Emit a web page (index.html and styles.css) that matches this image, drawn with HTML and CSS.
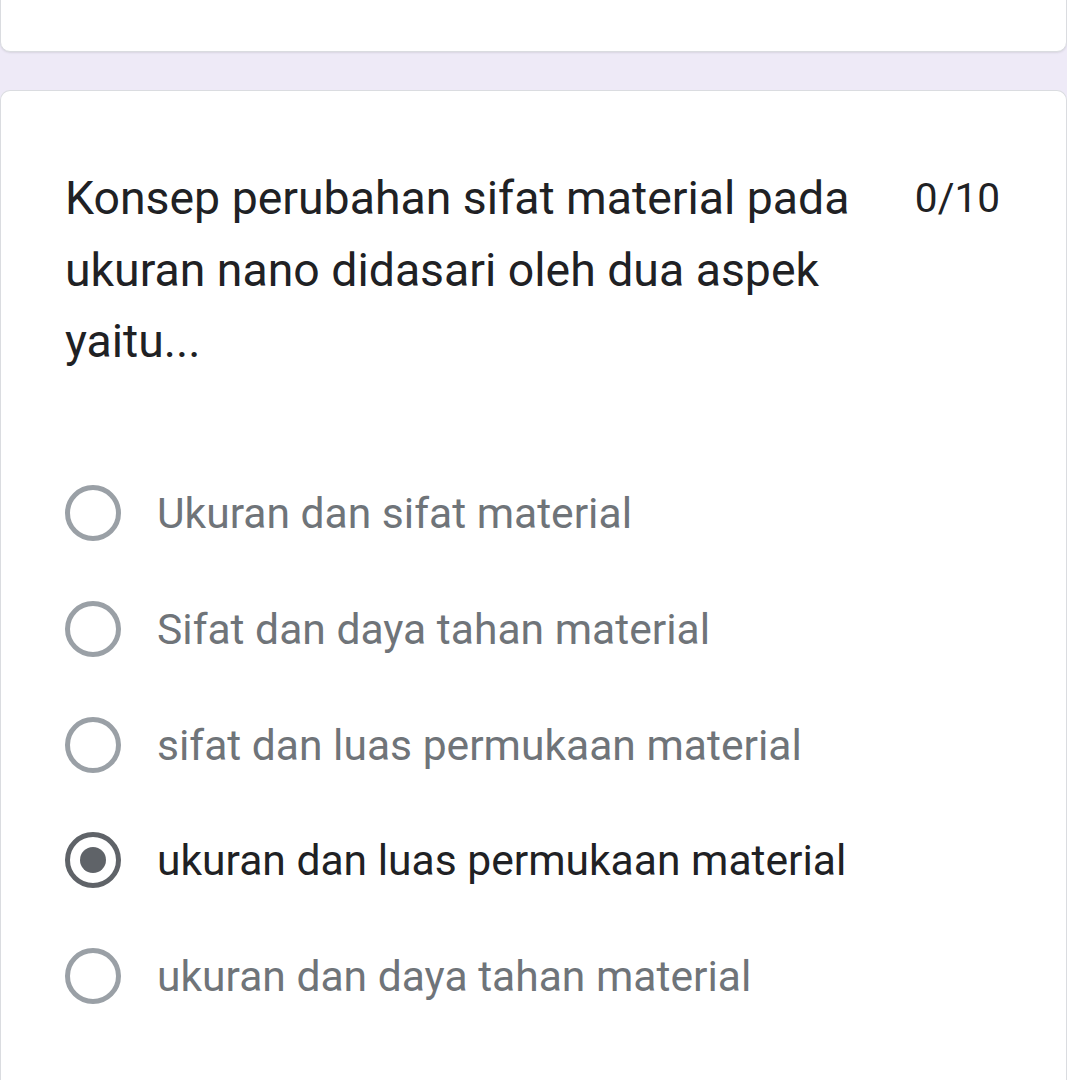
FILE: index.html
```html
<!DOCTYPE html>
<html lang="id">
<head>
  <meta charset="UTF-8">
  <meta name="viewport" content="width=device-width, initial-scale=1.0">
  <title>Kuis</title>
  <link rel="stylesheet" href="styles.css">
</head>
<body>
  <div class="card card-top"></div>

  <div class="card question-card">
    <div class="question-head">
      <div class="question-title">Konsep perubahan sifat material pada ukuran nano didasari oleh dua aspek yaitu...</div>
      <div class="score">0/10</div>
    </div>

    <ul class="options">
      <li class="option"><span class="radio"></span><span class="label">Ukuran dan sifat material</span></li>
      <li class="option"><span class="radio"></span><span class="label">Sifat dan daya tahan material</span></li>
      <li class="option"><span class="radio"></span><span class="label">sifat dan luas permukaan material</span></li>
      <li class="option checked"><span class="radio"></span><span class="label">ukuran dan luas permukaan material</span></li>
      <li class="option"><span class="radio"></span><span class="label">ukuran dan daya tahan material</span></li>
    </ul>
  </div>
</body>
</html>
```

FILE: styles.css
```css
body {
  margin: 0;
  background-color: #eeeaf7;
  font-family: Roboto, "Noto Sans", sans-serif;
  color: #202124;
}

.card {
  background-color: #ffffff;
  border: 1px solid #dadce0;
  border-radius: 10px;
  box-sizing: border-box;
}

.card-top {
  height: 62px;
  margin-top: -10px;
  box-shadow: 0 1px 2px rgba(60, 64, 67, 0.12);
}

.question-card {
  margin-top: 38px;
  padding: 72px 66px 0 64px;
  height: 990px;
  border-bottom: none;
  border-radius: 10px 10px 0 0;
}

.question-head {
  display: flex;
  justify-content: space-between;
  gap: 30px;
}

.question-title {
  font-size: 46.4px;
  line-height: 71.5px;
  width: 812px;
}

.score {
  font-size: 40.6px;
  line-height: 71.5px;
  white-space: nowrap;
}

.options {
  list-style: none;
  margin: 78px 0 0;
  padding: 0;
}

.option {
  display: flex;
  align-items: center;
  gap: 36px;
  height: 115.7px;
}

.radio {
  width: 56px;
  height: 56px;
  box-sizing: border-box;
  border: 5px solid #9aa0a6;
  border-radius: 50%;
  flex-shrink: 0;
  position: relative;
}

.label {
  font-size: 42.6px;
  color: #6f7479;
}

.option.checked .radio {
  border-color: #5f6368;
}

.option.checked .radio::after {
  content: "";
  position: absolute;
  top: 10px;
  left: 10px;
  width: 26px;
  height: 26px;
  border-radius: 50%;
  background-color: #5f6368;
}

.option.checked .label {
  color: #202124;
}
```
